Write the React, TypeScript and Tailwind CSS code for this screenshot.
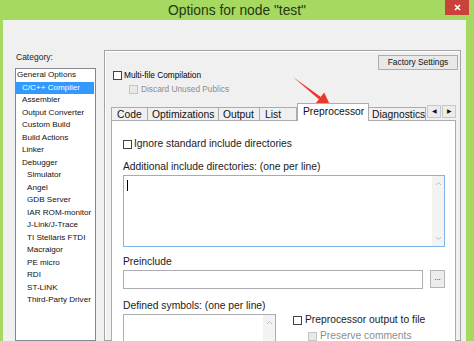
import React from 'react';

const categories: { label: string; level: 0 | 1 | 2; selected?: boolean }[] = [
  { label: 'General Options', level: 0 },
  { label: 'C/C++ Compiler', level: 1, selected: true },
  { label: 'Assembler', level: 1 },
  { label: 'Output Converter', level: 1 },
  { label: 'Custom Build', level: 1 },
  { label: 'Build Actions', level: 1 },
  { label: 'Linker', level: 1 },
  { label: 'Debugger', level: 1 },
  { label: 'Simulator', level: 2 },
  { label: 'Angel', level: 2 },
  { label: 'GDB Server', level: 2 },
  { label: 'IAR ROM-monitor', level: 2 },
  { label: 'J-Link/J-Trace', level: 2 },
  { label: 'TI Stellaris FTDI', level: 2 },
  { label: 'Macraigor', level: 2 },
  { label: 'PE micro', level: 2 },
  { label: 'RDI', level: 2 },
  { label: 'ST-LINK', level: 2 },
  { label: 'Third-Party Driver', level: 2 },
];

const indent = { 0: 'pl-[1px]', 1: 'pl-[6px]', 2: 'pl-[11px]' };

const Check: React.FC<{ disabled?: boolean }> = ({ disabled }) => (
  <span
    className={
      disabled
        ? 'block w-[9px] h-[9px] shrink-0 border border-[#c4c4c4] bg-[#e8e8e8]'
        : 'block w-[9px] h-[9px] shrink-0 border border-[#444] bg-white'
    }
  />
);

// little scrollbar strip with up / down chevrons
const ScrollStrip: React.FC<{ down?: boolean }> = ({ down = true }) => (
  <div className="w-[12px] h-full bg-[#f3f3f3] flex flex-col items-center justify-between py-[5px]">
    <svg width="7" height="5" viewBox="0 0 7 5">
      <path d="M1 4 L3.5 1.5 L6 4" stroke="#bdbdbd" strokeWidth="1" fill="none" />
    </svg>
    {down && (
      <svg width="7" height="5" viewBox="0 0 7 5">
        <path d="M1 1 L3.5 3.5 L6 1" stroke="#bdbdbd" strokeWidth="1" fill="none" />
      </svg>
    )}
  </div>
);

const App: React.FC = () => {
  return (
    <div className="relative w-[474px] h-[341px] overflow-hidden bg-[#a6d960] flex flex-col font-['Liberation_Sans',Arial,sans-serif] text-black">
      {/* Title bar */}
      <div className="relative h-[20px] shrink-0 flex items-center justify-center">
        <span className="text-[13.8px] leading-none text-[#243814] pt-[1px]">Options for node "test"</span>
        <div className="absolute right-[5px] top-0 w-[24px] h-[15px] bg-[#c9423b] flex items-center justify-center">
          <svg width="7" height="7" viewBox="0 0 7 7">
            <path d="M1 1 L6 6 M6 1 L1 6" stroke="white" strokeWidth="1.6" />
          </svg>
        </div>
      </div>

      {/* Client area */}
      <div className="flex-1 ml-[3px] mr-[8px] bg-[#f0f0f0] flex min-h-0">
        {/* Category column */}
        <div className="w-[93px] shrink-0 pl-[12px] pt-[32px] flex flex-col">
          <div className="text-[8.5px] leading-[10px] pl-[1px] mb-[6px] text-[#222]">Category:</div>
          <div className="flex-1 border border-[#828790] bg-white text-[8.1px] text-[#111] overflow-hidden">
            {categories.map((c) => (
              <div
                key={c.label}
                className={`h-[12.5px] leading-[12.5px] whitespace-nowrap ${indent[c.level]} ${
                  c.selected ? 'bg-[#3399ff] text-white mr-[1px]' : ''
                }`}
              >
                {c.label}
              </div>
            ))}
          </div>
        </div>

        {/* Options panel */}
        <div className="flex-1 ml-[8px] mr-[5px] mt-[30px] border border-[#a3a3a3] shadow-[inset_1px_1px_0_#ffffff] flex flex-col min-w-0">
          <div className="flex justify-end pt-[4px] pr-[2px]">
            <div className="w-[80px] h-[15px] border border-[#adadad] bg-[#e8e8e8] flex items-center justify-center text-[8.4px] text-[#111]">
              Factory Settings
            </div>
          </div>

          <div className="flex items-center h-[10px] pl-[8px] gap-[2px] text-[8.3px]">
            <Check />
            <span>Multi-file Compilation</span>
          </div>
          <div className="flex items-center h-[10px] mt-[4.5px] pl-[24px] gap-[3px] text-[8.3px] text-[#8d8d8d]">
            <Check disabled />
            <span>Discard Unused Publics</span>
          </div>

          {/* Tab strip */}
          <div className="mt-[8.5px] ml-[6px] flex items-end h-[17px] text-[10.3px] text-[#111]">
            <div className="w-[37px] h-[13px] border border-b-0 border-[#acacac] bg-[#f0f0f0] pl-[5px] leading-[13px]">Code</div>
            <div className="w-[71px] h-[13px] border border-l-0 border-b-0 border-[#acacac] bg-[#f0f0f0] pl-[4px] leading-[13px]">Optimizations</div>
            <div className="w-[41px] h-[13px] border border-l-0 border-b-0 border-[#acacac] bg-[#f0f0f0] pl-[4px] leading-[13px]">Output</div>
            <div className="w-[37px] h-[13px] border border-l-0 border-b-0 border-[#acacac] bg-[#f0f0f0] pl-[5px] leading-[13px]">List</div>
            <div className="relative z-10 w-[72px] h-[18px] -mb-[1px] border border-b-0 border-[#acacac] bg-white pl-[5px] leading-[16px]">Preprocessor</div>
            <div className="w-[57px] h-[13px] overflow-hidden whitespace-nowrap border border-l-0 border-b-0 border-[#acacac] bg-[#f0f0f0] pl-[3px] leading-[13px]">Diagnostics</div>
            <div className="ml-[1px] w-[14px] h-[13px] border border-[#c8c8c8] bg-[#ececec] flex items-center justify-center text-[6px] mb-[2px]">◀</div>
            <div className="ml-[1px] w-[14px] h-[13px] border border-[#c8c8c8] bg-[#ececec] flex items-center justify-center text-[6px] mb-[2px]">▶</div>
          </div>

          {/* Tab page */}
          <div className="flex-1 ml-[6px] mr-[4px] border border-b-0 border-[#acacac] bg-white pl-[11px] pr-[10px] flex flex-col text-[10.3px] text-[#1a1a1a]">
            <div className="mt-[17px] h-[12px] flex items-center gap-[2px]">
              <Check />
              <span className="whitespace-nowrap overflow-hidden w-[158px]">Ignore standard include directories</span>
            </div>

            <div className="mt-[11px] h-[12px] leading-[12px]">Additional include directories: (one per line)</div>
            <div className="mt-[2px] h-[72px] border border-[#7eb4ea] flex">
              <div className="flex-1 pl-[3px] pt-[4px]">
                <div className="w-px h-[11px] bg-black" />
              </div>
              <ScrollStrip />
            </div>

            <div className="mt-[9px] h-[12px] leading-[12px]">Preinclude</div>
            <div className="mt-[2px] h-[19px] flex gap-[7px]">
              <div className="flex-1 border border-[#abadb3] bg-white" />
              <div className="w-[15px] h-[18px] border border-[#b5b5b5] bg-[#ececec] flex items-center justify-center text-[8px] leading-none pb-[2px]">...</div>
            </div>

            <div className="mt-[11px] h-[12px] leading-[12px]">Defined symbols: (one per line)</div>
            <div className="mt-[2px] flex flex-1">
              <div className="w-[153px] h-[60px] border border-[#abadb3] flex">
                <div className="flex-1" />
                <ScrollStrip down={false} />
              </div>
              <div className="ml-[17px] flex flex-col">
                <div className="mt-[1px] h-[10px] flex items-center gap-[3px]">
                  <Check />
                  <span className="whitespace-nowrap">Preprocessor output to file</span>
                </div>
                <div className="mt-[6px] ml-[15px] h-[10px] flex items-center gap-[3px] text-[#8d8d8d]">
                  <Check disabled />
                  <span className="whitespace-nowrap">Preserve comments</span>
                </div>
              </div>
            </div>
          </div>
        </div>
      </div>

      {/* Red annotation arrow pointing at the Preprocessor tab */}
      <svg className="absolute left-0 top-0 pointer-events-none" width="474" height="341" viewBox="0 0 474 341">
        <polygon points="293,77 319.1,99.5 320.9,97.1" fill="#e8382b" />
        <polygon points="331,107 315.8,103.3 324.2,92.4" fill="#e8382b" />
      </svg>
    </div>
  );
};

export default App;
